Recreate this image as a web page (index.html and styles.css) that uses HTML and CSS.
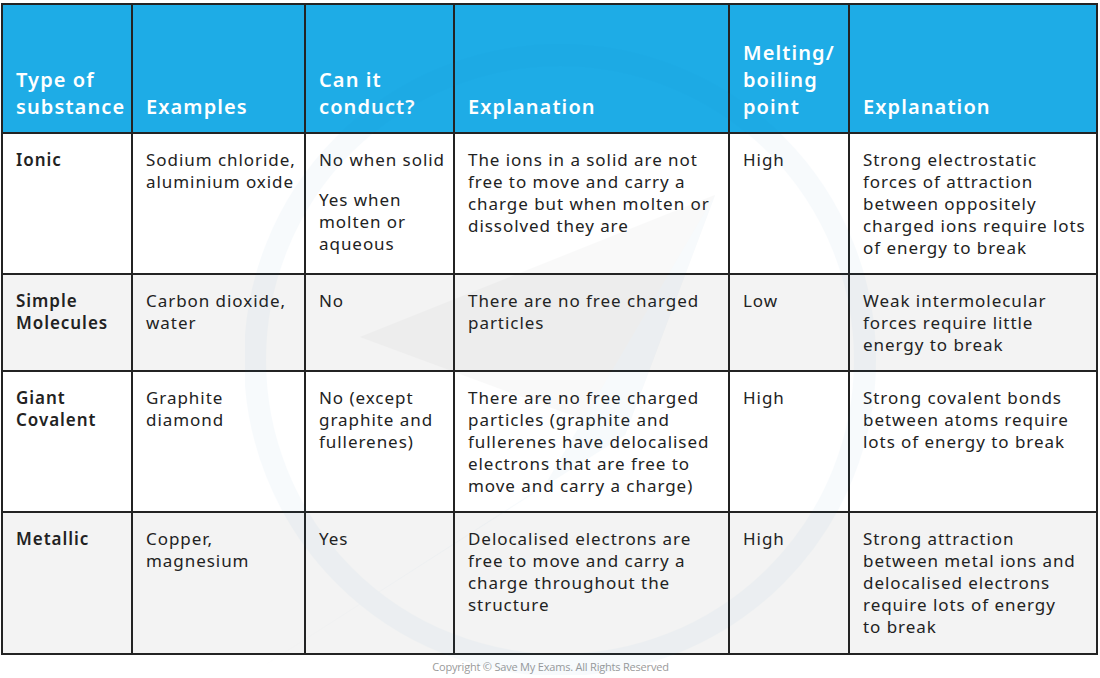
FILE: index.html
```html
<!DOCTYPE html>
<html lang="en">
<head>
<meta charset="utf-8">
<title>Types of substance</title>
<link rel="stylesheet" href="styles.css">
</head>
<body>
<div class="page">
  <div class="grid">
    <div class="cell head">Type of<br>substance</div>
    <div class="cell head">Examples</div>
    <div class="cell head">Can it<br>conduct?</div>
    <div class="cell head">Explanation</div>
    <div class="cell head">Melting/<br>boiling<br>point</div>
    <div class="cell head">Explanation</div>

    <div class="cell first">Ionic</div>
    <div class="cell">Sodium chloride,<br>aluminium oxide</div>
    <div class="cell"><p>No when solid</p><p>Yes when<br>molten or<br>aqueous</p></div>
    <div class="cell">The ions in a solid are not<br>free to move and carry a<br>charge but when molten or<br>dissolved they are</div>
    <div class="cell">High</div>
    <div class="cell">Strong electrostatic<br>forces of attraction<br>between oppositely<br>charged ions require lots<br>of energy to break</div>

    <div class="cell first alt">Simple<br>Molecules</div>
    <div class="cell alt">Carbon dioxide,<br>water</div>
    <div class="cell alt">No</div>
    <div class="cell alt">There are no free charged<br>particles</div>
    <div class="cell alt">Low</div>
    <div class="cell alt">Weak intermolecular<br>forces require little<br>energy to break</div>

    <div class="cell first">Giant<br>Covalent</div>
    <div class="cell">Graphite<br>diamond</div>
    <div class="cell">No (except<br>graphite and<br>fullerenes)</div>
    <div class="cell">There are no free charged<br>particles (graphite and<br>fullerenes have delocalised<br>electrons that are free to<br>move and carry a charge)</div>
    <div class="cell">High</div>
    <div class="cell">Strong covalent bonds<br>between atoms require<br>lots of energy to break</div>

    <div class="cell first alt">Metallic</div>
    <div class="cell alt">Copper,<br>magnesium</div>
    <div class="cell alt">Yes</div>
    <div class="cell alt">Delocalised electrons are<br>free to move and carry a<br>charge throughout the<br>structure</div>
    <div class="cell alt">High</div>
    <div class="cell alt">Strong attraction<br>between metal ions and<br>delocalised electrons<br>require lots of energy<br>to break</div>
  </div>
  <svg class="watermark" width="700" height="660" viewBox="0 0 700 660" aria-hidden="true">
    <circle cx="315" cy="345" r="305" fill="none" stroke="#1d7fc4" stroke-width="22"/>
    <polygon points="115,322 470,180 380,420" fill="#555"/>
    <polygon points="380,420 470,180 300,470 20,650" fill="#1d7fc4"/>
  </svg>
  <div class="copyright">Copyright © Save My Exams. All Rights Reserved</div>
</div>
</body>
</html>
```

FILE: styles.css
```css
html, body {
  margin: 0;
  padding: 0;
  background: #ffffff;
}

.page {
  position: relative;
  width: 1100px;
  height: 678px;
  padding: 3px 0 0 1px;
  box-sizing: border-box;
}

.grid {
  display: grid;
  grid-template-columns: 130px 173px 149px 275px 120px 248px;
  grid-template-rows: 129px 141px 97px 141px 142px;
  width: max-content;
  border-left: 2px solid #232323;
  border-top: 2px solid #232323;
  font-family: "Noto Sans", "Open Sans", sans-serif;
  color: #222222;
}

.cell {
  box-sizing: border-box;
  border-right: 2px solid #232323;
  border-bottom: 2px solid #232323;
  padding: 15px 0 0 13px;
  font-size: 17px;
  line-height: 22px;
  letter-spacing: 0.95px;
  white-space: nowrap;
  overflow: hidden;
  background: #ffffff;
}

.cell p {
  margin: 0 0 18px 0;
}

.cell.alt {
  background: #f3f3f3;
}

.cell.first {
  font-weight: 600;
}

.cell.head {
  background: #1eace6;
  color: #ffffff;
  font-size: 20px;
  line-height: 27px;
  font-weight: 600;
  letter-spacing: 1.1px;
  display: flex;
  flex-direction: column;
  justify-content: flex-end;
  padding: 0 0 12px 13px;
}

.watermark {
  position: absolute;
  left: 245px;
  top: 15px;
  opacity: 0.03;
  pointer-events: none;
}

.copyright {
  text-align: center;
  font-family: "Open Sans", "Liberation Sans", sans-serif;
  font-size: 11px;
  color: #9a9a9a;
  margin-top: 4px;
  letter-spacing: -0.2px;
}
```
